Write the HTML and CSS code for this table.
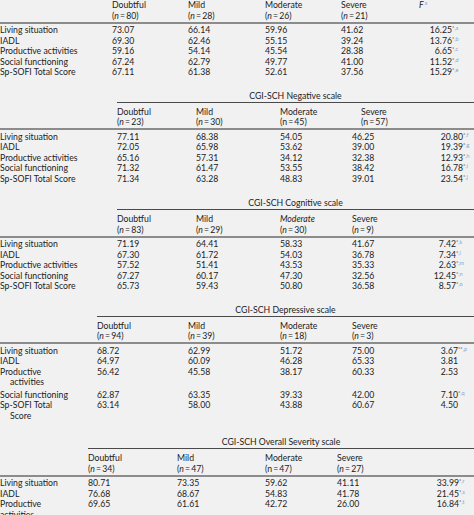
FILE: index.html
```html
<!DOCTYPE html>
<html>
<head>
<meta charset="utf-8">
<link rel="stylesheet" href="styles.css">
</head>
<body>
<div class="page">

<section class="sec s1">
  <div class="hd"></div>
  <div class="hd">Doubtful<br>(<i>n</i>&thinsp;=&thinsp;80)</div>
  <div class="hd">Mild<br>(<i>n</i>&thinsp;=&thinsp;28)</div>
  <div class="hd">Moderate<br>(<i>n</i>&thinsp;=&thinsp;26)</div>
  <div class="hd">Severe<br>(<i>n</i>&thinsp;=&thinsp;21)</div>
  <div class="hd fh"><i>F</i><sup class="lk">a</sup></div>
  <div class="rule"></div>
  <div class="lab">Living situation</div><div>73.07</div><div>66.14</div><div>59.96</div><div>41.62</div><div class="f">16.25<sup><b>*</b><span class="lk">,a</span></sup></div>
  <div class="lab">IADL</div><div>69.30</div><div>62.46</div><div>55.15</div><div>39.24</div><div class="f">13.76<sup><b>*</b><span class="lk">,b</span></sup></div>
  <div class="lab">Productive activities</div><div>59.16</div><div>54.14</div><div>45.54</div><div>28.38</div><div class="f">6.65<sup><b>*</b><span class="lk">,c</span></sup></div>
  <div class="lab">Social functioning</div><div>67.24</div><div>62.79</div><div>49.77</div><div>41.00</div><div class="f">11.52<sup><b>*</b><span class="lk">,d</span></sup></div>
  <div class="lab">Sp-SOFI Total Score</div><div>67.11</div><div>61.38</div><div>52.61</div><div>37.56</div><div class="f">15.29<sup><b>*</b><span class="lk">,e</span></sup></div>
</section>

<section class="sec s2">
  <div></div><div class="title">CGI-SCH Negative scale</div>
  <div class="hd"></div>
  <div class="hd">Doubtful<br>(<i>n</i>&thinsp;=&thinsp;23)</div>
  <div class="hd">Mild<br>(<i>n</i>&thinsp;=&thinsp;30)</div>
  <div class="hd">Moderate<br>(n&thinsp;=&thinsp;45)</div>
  <div class="hd shift">Severe<br>(n&thinsp;=&thinsp;57)</div>
  <div class="hd"></div>
  <div class="rule"></div>
  <div class="lab">Living situation</div><div>77.11</div><div>68.38</div><div>54.05</div><div>46.25</div><div class="f">20.80<sup><b>*</b><span class="lk">,f</span></sup></div>
  <div class="lab">IADL</div><div>72.05</div><div>65.98</div><div>53.62</div><div>39.00</div><div class="f">19.39<sup><b>*</b><span class="lk">,g</span></sup></div>
  <div class="lab">Productive activities</div><div>65.16</div><div>57.31</div><div>34.12</div><div>32.38</div><div class="f">12.93<sup><b>*</b><span class="lk">,h</span></sup></div>
  <div class="lab">Social functioning</div><div>71.32</div><div>61.47</div><div>53.55</div><div>38.42</div><div class="f">16.78<sup><b>*</b><span class="lk">,i</span></sup></div>
  <div class="lab">Sp-SOFI Total Score</div><div>71.34</div><div>63.28</div><div>48.83</div><div>39.01</div><div class="f">23.54<sup><b>*</b><span class="lk">,j</span></sup></div>
</section>

<section class="sec s3">
  <div></div><div class="title">CGI-SCH Cognitive scale</div>
  <div class="hd"></div>
  <div class="hd">Doubtful<br>(<i>n</i>&thinsp;=&thinsp;83)</div>
  <div class="hd">Mild<br>(<i>n</i>&thinsp;=&thinsp;29)</div>
  <div class="hd"><i>Moderate</i><br>(<i>n</i>&thinsp;=&thinsp;30)</div>
  <div class="hd">Severe<br>(<i>n</i>&thinsp;=&thinsp;9)</div>
  <div class="hd"></div>
  <div class="rule"></div>
  <div class="lab">Living situation</div><div>71.19</div><div>64.41</div><div>58.33</div><div>41.67</div><div class="f">7.42<sup><b>*</b><span class="lk">,k</span></sup></div>
  <div class="lab">IADL</div><div>67.30</div><div>61.72</div><div>54.03</div><div>36.78</div><div class="f">7.34<sup><b>*</b><span class="lk">,l</span></sup></div>
  <div class="lab">Productive activities</div><div>57.52</div><div>51.41</div><div>43.53</div><div>35.33</div><div class="f">2.63<sup><b>*</b><span class="lk">,m</span></sup></div>
  <div class="lab">Social functioning</div><div>67.27</div><div>60.17</div><div>47.30</div><div>32.56</div><div class="f">12.45<sup><b>*</b><span class="lk">,n</span></sup></div>
  <div class="lab">Sp-SOFI Total Score</div><div>65.73</div><div>59.43</div><div>50.80</div><div>36.58</div><div class="f">8.57<sup><b>*</b><span class="lk">,o</span></sup></div>
</section>

<section class="sec s4">
  <div></div><div class="title">CGI-SCH Depressive scale</div>
  <div class="hd"></div>
  <div class="hd">Doubtful<br>(<i>n</i>&thinsp;=&thinsp;94)</div>
  <div class="hd">Mild<br>(<i>n</i>&thinsp;=&thinsp;39)</div>
  <div class="hd">Moderate<br>(<i>n</i>&thinsp;=&thinsp;18)</div>
  <div class="hd">Severe<br>(<i>n</i>&thinsp;=&thinsp;3)</div>
  <div class="hd"></div>
  <div class="rule"></div>
  <div class="lab">Living situation</div><div>68.72</div><div>62.99</div><div>51.72</div><div>75.00</div><div class="f">3.67<sup><b>**</b><span class="lk">,p</span></sup></div>
  <div class="lab">IADL</div><div>64.97</div><div>60.09</div><div>46.28</div><div>65.33</div><div class="f">3.81<sup></sup></div>
  <div class="lab w">Productive<br><span class="ind">activities</span></div><div>56.42</div><div>45.58</div><div>38.17</div><div>60.33</div><div class="f">2.53<sup></sup></div>
  <div class="lab">Social functioning</div><div>62.87</div><div>63.35</div><div>39.33</div><div>42.00</div><div class="f">7.10<sup><b>*</b><span class="lk">,q</span></sup></div>
  <div class="lab w">Sp-SOFI Total<br><span class="ind">Score</span></div><div>63.14</div><div>58.00</div><div>43.88</div><div>60.67</div><div class="f">4.50<sup></sup></div>
</section>

<section class="sec s5">
  <div></div><div class="title">CGI-SCH Overall Severity scale</div>
  <div class="hd"></div>
  <div class="hd">Doubtful<br>(<i>n</i>&thinsp;=&thinsp;34)</div>
  <div class="hd">Mild<br>(<i>n</i>&thinsp;=&thinsp;47)</div>
  <div class="hd">Moderate<br>(n&thinsp;=&thinsp;47)</div>
  <div class="hd">Severe<br>(<i>n</i>&thinsp;=&thinsp;27)</div>
  <div class="hd"></div>
  <div class="rule"></div>
  <div class="lab">Living situation</div><div>80.71</div><div>73.35</div><div>59.62</div><div>41.11</div><div class="f">33.99<sup><b>*</b><span class="lk">,r</span></sup></div>
  <div class="lab">IADL</div><div>76.68</div><div>68.67</div><div>54.83</div><div>41.78</div><div class="f">21.45<sup><b>*</b><span class="lk">,s</span></sup></div>
  <div class="lab w">Productive<br>activities</div><div>69.65</div><div>61.61</div><div>42.72</div><div>26.00</div><div class="f">16.84<sup><b>*</b><span class="lk">,t</span></sup></div>
</section>

</div>
</body>
</html>
```

FILE: styles.css
```css
html, body {
  margin: 0;
  padding: 0;
  background: #f1f1f1;
}
body {
  font-family: "Lato", "Open Sans", sans-serif;
  font-size: 8.7px;
  line-height: 10.5px;
  color: #222222;
  overflow: hidden;
}
.page {
  width: 474px;
}
.sec {
  display: grid;
  grid-template-columns: var(--cols);
}
.s1 { --cols: 112px 76px 77px 76px 77px 1fr; --fpad: 12px; }
.s2 { --cols: 117px 79px 84px 72px 66px 1fr; --fpad: 1px; margin-top: 12px; }
.s3 { --cols: 117px 79px 84px 72px 66px 1fr; --fpad: 8px; margin-top: 13px; }
.s4 { --cols: 97px 91px 92px 72px 66px 1fr; --fpad: 6px; margin-top: 12px; }
.s5 { --cols: 88px 89px 88px 72px 66px 1fr; --fpad: 5px; margin-top: 13px; }

.title {
  grid-column: 2 / -1;
  text-align: center;
  line-height: 11px;
  padding-bottom: 1px;
  border-bottom: 1px solid #4a4a4a;
  margin-bottom: 4px;
}
.hd {
  white-space: nowrap;
}
.shift { padding-left: 9px; }
.fh { padding-left: 1px; }
.rule {
  grid-column: 1 / -1;
  height: 2px;
  background: #8c8c8c;
  margin: 0.5px 0 1.5px;
}
.lab {
  white-space: nowrap;
}
.lab.w { padding-bottom: 2px; }
.ind { padding-left: 10px; }
.f {
  text-align: right;
  padding-right: var(--fpad);
  white-space: nowrap;
}
sup {
  display: inline-block;
  width: 10px;
  text-align: left;
  font-size: 5.5px;
  line-height: 5px;
  vertical-align: 3px;
}
sup b {
  font-weight: normal;
  color: #444444;
}
.lk {
  color: #7aaad2;
}
.fh sup {
  width: auto;
  margin-left: 1px;
}
```
